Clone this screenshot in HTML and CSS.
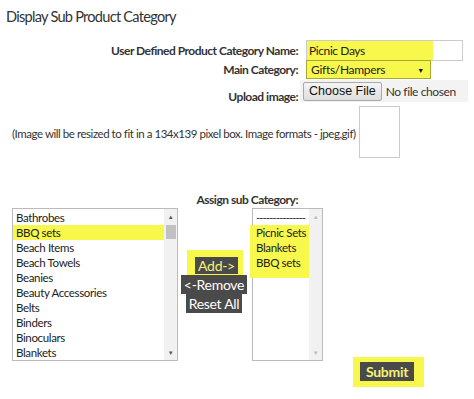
FILE: index.html
```html
<!DOCTYPE html>
<html>
<head>
<meta charset="utf-8">
<link rel="stylesheet" href="styles.css">
</head>
<body>
<h1 class="title">Display Sub Product Category</h1>
<div class="form">
  <div class="row r1">
    <div class="label">User Defined Product Category Name:</div>
    <div class="textbox"><span class="hl">Picnic Days</span></div>
  </div>
  <div class="row r2">
    <div class="label">Main Category:</div>
    <div class="select"><span>Gifts/Hampers</span><span class="arrow">&#9660;</span></div>
  </div>
  <div class="row r3">
    <div class="label">Upload image:</div>
    <div class="file"><span class="fbtn">Choose File</span><span class="ftext">No file chosen</span></div>
  </div>
  <div class="note">
    <span>(Image will be resized to fit in a 134x139 pixel box. Image formats - jpeg,gif)</span>
    <div class="imgbox"></div>
  </div>
  <div class="row r4">
    <div class="label">Assign sub Category:</div>
  </div>
  <div class="assign">
    <div class="list left">
      <div class="items">
        <div class="item">Bathrobes</div>
        <div class="item sel">BBQ sets</div>
        <div class="item">Beach Items</div>
        <div class="item">Beach Towels</div>
        <div class="item">Beanies</div>
        <div class="item">Beauty Accessories</div>
        <div class="item">Belts</div>
        <div class="item">Binders</div>
        <div class="item">Binoculars</div>
        <div class="item">Blankets</div>
      </div>
      <div class="scroll">
        <span class="up">&#9650;</span>
        <span class="thumb"></span>
        <span class="down">&#9660;</span>
      </div>
    </div>
    <div class="buttons">
      <div class="addwrap"><span class="btn add">Add-&gt;</span></div>
      <span class="btn">&lt;-Remove</span>
      <span class="btn">Reset All</span>
    </div>
    <div class="list right">
      <div class="items">
        <div class="item dash">---------------</div>
        <div class="hlgroup">
          <div class="item">Picnic Sets</div>
          <div class="item">Blankets</div>
          <div class="item">BBQ sets</div>
        </div>
      </div>
      <div class="scroll light">
        <span class="up">&#9650;</span>
        <span class="down">&#9660;</span>
      </div>
    </div>
  </div>
  <div class="submitrow">
    <div class="subwrap"><span class="btn submit">Submit</span></div>
  </div>
</div>
</body>
</html>
```
FILE: styles.css
```css
html, body {
  margin: 0;
  padding: 0;
  background: #fff;
}
body {
  font-family: Lato, "Open Sans", sans-serif;
  color: #333;
  width: 474px;
  height: 399px;
  overflow: hidden;
}
.title {
  font-weight: normal;
  font-size: 14.6px;
  line-height: 18px;
  letter-spacing: -0.75px;
  margin: 0;
  padding: 8px 0 0 6px;
  color: #333;
}
.form {
  padding-top: 14px;
}
.row {
  display: flex;
  align-items: center;
}
.label {
  width: 298px;
  text-align: right;
  font-weight: bold;
  font-size: 12px;
  letter-spacing: -0.5px;
  color: #333;
  flex: none;
}
.r1 { height: 20px; }
.r2 { height: 19px; }
.r3 { height: 22px; margin-top: 1px; align-items: flex-start; }
.r3 .label { padding-top: 9px; }
.textbox {
  margin-left: 8px;
  width: 155px;
  height: 19px;
  border: 1px solid #ccc;
  display: flex;
  align-items: stretch;
}
.textbox .hl {
  background: #f8f84c;
  width: 124px;
  font-size: 12px;
  letter-spacing: -0.4px;
  line-height: 19px;
  padding-left: 2px;
  color: #222;
}
.select {
  margin-left: 8px;
  height: 17px;
  border: 1px solid #a8a83a;
  background: #f8f84c;
  display: flex;
  justify-content: space-between;
  align-items: center;
  font-size: 12px;
  letter-spacing: -0.3px;
  color: #222;
  padding: 0 6px 0 4px;
  width: 113px;
}
.select .arrow { font-size: 7px; color: #111; }
.file {
  margin-left: 2px;
  width: 168px;
  height: 22px;
  background: #f3f3f3;
  display: flex;
  align-items: center;
  font-size: 12px;
  letter-spacing: -0.4px;
}
.fbtn {
  margin-left: 3px;
  height: 17px;
  border: 1px solid #aaa;
  border-radius: 2px;
  background: linear-gradient(#f5f5f5, #dedede);
  font-family: "Liberation Sans", Arial, sans-serif;
  font-size: 12.5px;
  letter-spacing: 0;
  line-height: 17px;
  padding: 0 5px;
  color: #111;
}
.ftext {
  margin-left: 4px;
  color: #333;
}
.note {
  display: flex;
  align-items: center;
  padding-left: 12px;
  margin-top: 4px;
  font-size: 11.5px;
  letter-spacing: -0.45px;
  color: #333;
}
.note span { padding-top: 2px; }
.imgbox {
  width: 39px;
  height: 50px;
  border: 1px solid #ccc;
  margin-left: 3px;
}
.r4 { margin-top: 33px; height: 16px; }
.assign {
  display: flex;
  align-items: flex-start;
  margin-top: 1px;
  padding-left: 12px;
}
.list {
  height: 151px;
  border: 1px solid #bbb;
  display: flex;
  justify-content: space-between;
  font-size: 11.5px;
  letter-spacing: -0.35px;
  color: #222;
}
.left { width: 164px; }
.right { width: 69px; margin-left: 2px; }
.items { padding-top: 1px; flex: 1; }
.item {
  line-height: 15px;
  padding-left: 3px;
  white-space: nowrap;
}
.left .item.sel {
  background: #f8f84c;
  margin-right: -2px;
}
.scroll {
  width: 13px;
  background: #f1f1f1;
  display: flex;
  flex-direction: column;
  align-items: center;
  font-size: 6px;
  color: #555;
}
.scroll .up { margin-top: 4px; }
.scroll .down { margin-top: auto; margin-bottom: 4px; }
.scroll .thumb {
  width: 10px;
  height: 14px;
  background: #c1c1c1;
  margin-top: 5px;
}
.scroll.light { color: #bbb; }
.dash { color: #333; letter-spacing: -1px; }
.hlgroup {
  background: #f8f84c;
  margin-left: -3px;
  padding-left: 3px;
  margin-right: -8px;
  padding-bottom: 8px;
}
.buttons {
  width: 72px;
  display: flex;
  flex-direction: column;
  align-items: center;
  padding-top: 42px;
}
.btn {
  background: #4a4a4a;
  color: #fff;
  font-size: 14px;
  letter-spacing: -0.3px;
  line-height: 19px;
  padding: 0 3px;
  white-space: nowrap;
}
.addwrap {
  background: #f8f84c;
  padding: 5px 5px 0 8px;
  margin-left: 2px;
}
.btn.add { color: #f2f27a; }
.submitrow {
  padding: 0 0 0 353px;
  margin-top: -4px;
}
.subwrap {
  display: inline-block;
  background: #f8f84c;
  padding: 5px 10px 6px 7px;
}
.btn.submit {
  display: block;
  color: #f2f27a;
  font-weight: bold;
  padding: 0 6px;
}
```
